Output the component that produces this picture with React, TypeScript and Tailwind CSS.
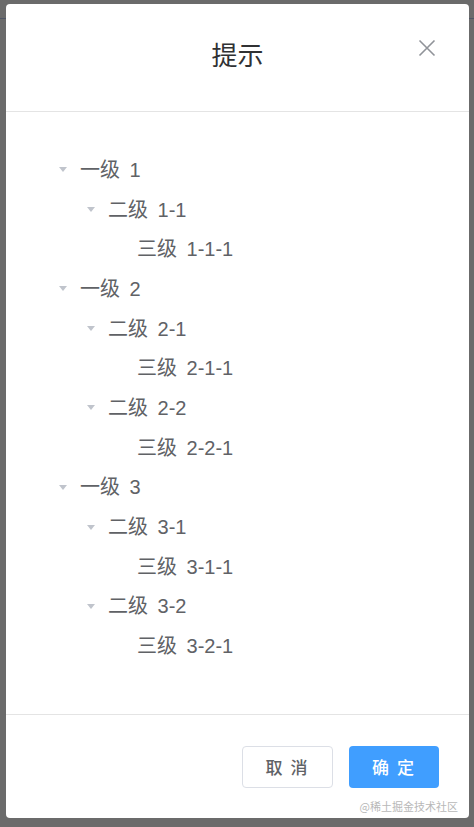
import React from 'react'

type Node = { label: string; children?: Node[] }

const tree: Node[] = [
  {
    label: '一级 1',
    children: [{ label: '二级 1-1', children: [{ label: '三级 1-1-1' }] }],
  },
  {
    label: '一级 2',
    children: [
      { label: '二级 2-1', children: [{ label: '三级 2-1-1' }] },
      { label: '二级 2-2', children: [{ label: '三级 2-2-1' }] },
    ],
  },
  {
    label: '一级 3',
    children: [
      { label: '二级 3-1', children: [{ label: '三级 3-1-1' }] },
      { label: '二级 3-2', children: [{ label: '三级 3-2-1' }] },
    ],
  },
]

const font = { fontFamily: '"Noto Sans CJK SC", "Noto Sans", sans-serif' }
const treeFont = { fontFamily: '"Liberation Sans", "Noto Sans CJK SC", sans-serif' }

function TreeRows({ nodes, level }: { nodes: Node[]; level: number }) {
  return (
    <>
      {nodes.map((n) => {
        const hasKids = !!n.children?.length
        return (
          <React.Fragment key={n.label}>
            <div className="flex h-[39.7px] items-center" style={{ paddingLeft: 53 + level * 28 }}>
              {hasKids ? (
                <span className="mr-[13px] h-0 w-0 border-x-[4.5px] border-t-[5px] border-x-transparent border-t-[#c0c4cc]" />
              ) : (
                <span className="mr-[13px] w-[9px]" />
              )}
              <span className="text-[20px] leading-none text-[#606266] [word-spacing:4px]" style={treeFont}>
                {n.label}
              </span>
            </div>
            {hasKids && <TreeRows nodes={n.children!} level={level + 1} />}
          </React.Fragment>
        )
      })}
    </>
  )
}

export default function App() {
  return (
    <main className="relative h-[827px] w-full overflow-hidden bg-[#6b6b6b]" style={font}>
      <div className="h-[19px] border-b border-[#4f5666]" />

      <div className="absolute left-[6px] top-[4px] flex h-[814px] w-[463px] flex-col rounded-[4px] bg-white">
        <header className="relative flex h-[108px] shrink-0 items-start justify-center border-b border-[#e4e4e4] pt-[33px]">
          <h1 className="text-[26px] leading-[34px] text-[#303133]">提示</h1>
          <button type="button" className="absolute right-[33px] top-[35px] text-[#909399]" aria-label="关闭">
            <svg width="18" height="18" viewBox="0 0 18 18" fill="none" stroke="currentColor" strokeWidth="1.6">
              <path d="M1.5 1.5 16.5 16.5M16.5 1.5 1.5 16.5" />
            </svg>
          </button>
        </header>

        <section className="flex-1 pt-[38px]">
          <TreeRows nodes={tree} level={0} />
        </section>

        <footer className="relative flex h-[104px] shrink-0 items-start justify-end gap-[16px] border-t border-[#e4e4e4] pr-[30px] pt-[31px]">
          <button
            type="button"
            className="h-[42px] w-[91px] rounded-[4px] border border-[#dcdfe6] bg-white text-[17px] font-medium tracking-[2px] text-[#606266]"
          >
            取 消
          </button>
          <button
            type="button"
            className="h-[42px] w-[90px] rounded-[4px] bg-[#409eff] text-[17px] font-medium tracking-[2px] text-white"
          >
            确 定
          </button>
          <span className="absolute bottom-[6px] right-[11px] text-[11px] leading-none text-[#b8b8b8]">@稀土掘金技术社区</span>
        </footer>
      </div>
    </main>
  )
}
